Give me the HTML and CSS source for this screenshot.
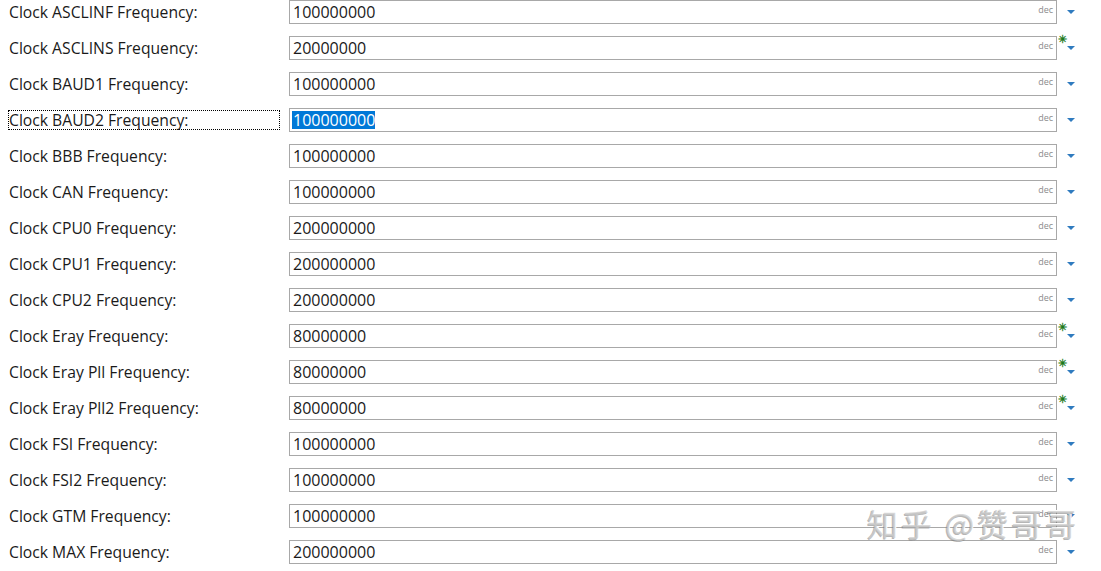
FILE: index.html
```html
<!DOCTYPE html>
<html lang="en">
  <head>
    <meta charset="UTF-8" />
    <title>Clock Frequencies</title>
    <link rel="stylesheet" href="styles.css">
  </head>
  <body>
    <div class="props">
      <div class="row">
        <div class="label">Clock ASCLINF Frequency:</div>
        <div class="field"><span class="value">100000000</span><span class="unit">dec</span></div>
        <div class="side"><span class="mark"></span><span class="arrow"></span></div>
      </div>
      <div class="row">
        <div class="label">Clock ASCLINS Frequency:</div>
        <div class="field"><span class="value">20000000</span><span class="unit">dec</span></div>
        <div class="side"><span class="mark">&#10035;</span><span class="arrow"></span></div>
      </div>
      <div class="row">
        <div class="label">Clock BAUD1 Frequency:</div>
        <div class="field"><span class="value">100000000</span><span class="unit">dec</span></div>
        <div class="side"><span class="mark"></span><span class="arrow"></span></div>
      </div>
      <div class="row">
        <div class="label focused">Clock BAUD2 Frequency:</div>
        <div class="field"><span class="value selected">100000000</span><span class="unit">dec</span></div>
        <div class="side"><span class="mark"></span><span class="arrow"></span></div>
      </div>
      <div class="row">
        <div class="label">Clock BBB Frequency:</div>
        <div class="field"><span class="value">100000000</span><span class="unit">dec</span></div>
        <div class="side"><span class="mark"></span><span class="arrow"></span></div>
      </div>
      <div class="row">
        <div class="label">Clock CAN Frequency:</div>
        <div class="field"><span class="value">100000000</span><span class="unit">dec</span></div>
        <div class="side"><span class="mark"></span><span class="arrow"></span></div>
      </div>
      <div class="row">
        <div class="label">Clock CPU0 Frequency:</div>
        <div class="field"><span class="value">200000000</span><span class="unit">dec</span></div>
        <div class="side"><span class="mark"></span><span class="arrow"></span></div>
      </div>
      <div class="row">
        <div class="label">Clock CPU1 Frequency:</div>
        <div class="field"><span class="value">200000000</span><span class="unit">dec</span></div>
        <div class="side"><span class="mark"></span><span class="arrow"></span></div>
      </div>
      <div class="row">
        <div class="label">Clock CPU2 Frequency:</div>
        <div class="field"><span class="value">200000000</span><span class="unit">dec</span></div>
        <div class="side"><span class="mark"></span><span class="arrow"></span></div>
      </div>
      <div class="row">
        <div class="label">Clock Eray Frequency:</div>
        <div class="field"><span class="value">80000000</span><span class="unit">dec</span></div>
        <div class="side"><span class="mark">&#10035;</span><span class="arrow"></span></div>
      </div>
      <div class="row">
        <div class="label">Clock Eray Pll Frequency:</div>
        <div class="field"><span class="value">80000000</span><span class="unit">dec</span></div>
        <div class="side"><span class="mark">&#10035;</span><span class="arrow"></span></div>
      </div>
      <div class="row">
        <div class="label">Clock Eray Pll2 Frequency:</div>
        <div class="field"><span class="value">80000000</span><span class="unit">dec</span></div>
        <div class="side"><span class="mark">&#10035;</span><span class="arrow"></span></div>
      </div>
      <div class="row">
        <div class="label">Clock FSI Frequency:</div>
        <div class="field"><span class="value">100000000</span><span class="unit">dec</span></div>
        <div class="side"><span class="mark"></span><span class="arrow"></span></div>
      </div>
      <div class="row">
        <div class="label">Clock FSI2 Frequency:</div>
        <div class="field"><span class="value">100000000</span><span class="unit">dec</span></div>
        <div class="side"><span class="mark"></span><span class="arrow"></span></div>
      </div>
      <div class="row">
        <div class="label">Clock GTM Frequency:</div>
        <div class="field"><span class="value">100000000</span><span class="unit">dec</span></div>
        <div class="side"><span class="mark"></span><span class="arrow"></span></div>
      </div>
      <div class="row">
        <div class="label">Clock MAX Frequency:</div>
        <div class="field"><span class="value">200000000</span><span class="unit">dec</span></div>
        <div class="side"><span class="mark"></span><span class="arrow"></span></div>
      </div>
    </div>

    <div class="watermark">知乎 @赞哥哥</div>
  </body>
</html>
```

FILE: styles.css
```css
* {
  margin: 0;
  padding: 0;
  box-sizing: border-box;
}

body {
  background-color: #fff;
  font-family: "Open Sans", "Noto Sans", Arial, sans-serif;
  color: #1a1a1a;
  overflow: hidden;
}

.props {
  display: flex;
  flex-direction: column;
  padding-left: 8px;
}

.row {
  display: flex;
  height: 36px;
}

.label {
  width: 272px;
  height: 20px;
  margin-top: 2px;
  font-size: 15.7px;
  line-height: 19px;
  border: 1px dotted transparent;
  white-space: nowrap;
}

.label.focused {
  border-color: #000;
}

.field {
  width: 768px;
  height: 24px;
  margin-left: 9px;
  border: 1px solid #a8a8a8;
  display: flex;
  justify-content: space-between;
  padding: 0 3px 0 2px;
}

.value {
  font-size: 16px;
  line-height: 18px;
  margin-top: 2px;
  height: 18px;
  padding-left: 1px;
}

.value.selected {
  background-color: #0078d7;
  color: #fff;
}

.unit {
  font-size: 9px;
  color: #8c8c8c;
  line-height: 12px;
  margin-top: 3px;
}

.side {
  position: relative;
  width: 40px;
}

.mark {
  position: absolute;
  left: 1px;
  top: -2px;
  font-size: 11px;
  font-weight: bold;
  color: #1a7a1a;
  line-height: 10px;
}

.arrow {
  position: absolute;
  left: 10px;
  top: 10px;
  width: 0;
  height: 0;
  border-left: 4px solid transparent;
  border-right: 4px solid transparent;
  border-top: 4px solid #2f7bbf;
}

.watermark {
  position: absolute;
  left: 867px;
  top: 500px;
  font-family: "Noto Sans CJK SC", sans-serif;
  font-size: 31px;
  color: rgba(205, 205, 205, 0.75);
  text-shadow: -1px 1px 0 rgba(110, 110, 110, 0.5), 1px -1px 0 #fff;
  white-space: nowrap;
  letter-spacing: 3px;
}
```
